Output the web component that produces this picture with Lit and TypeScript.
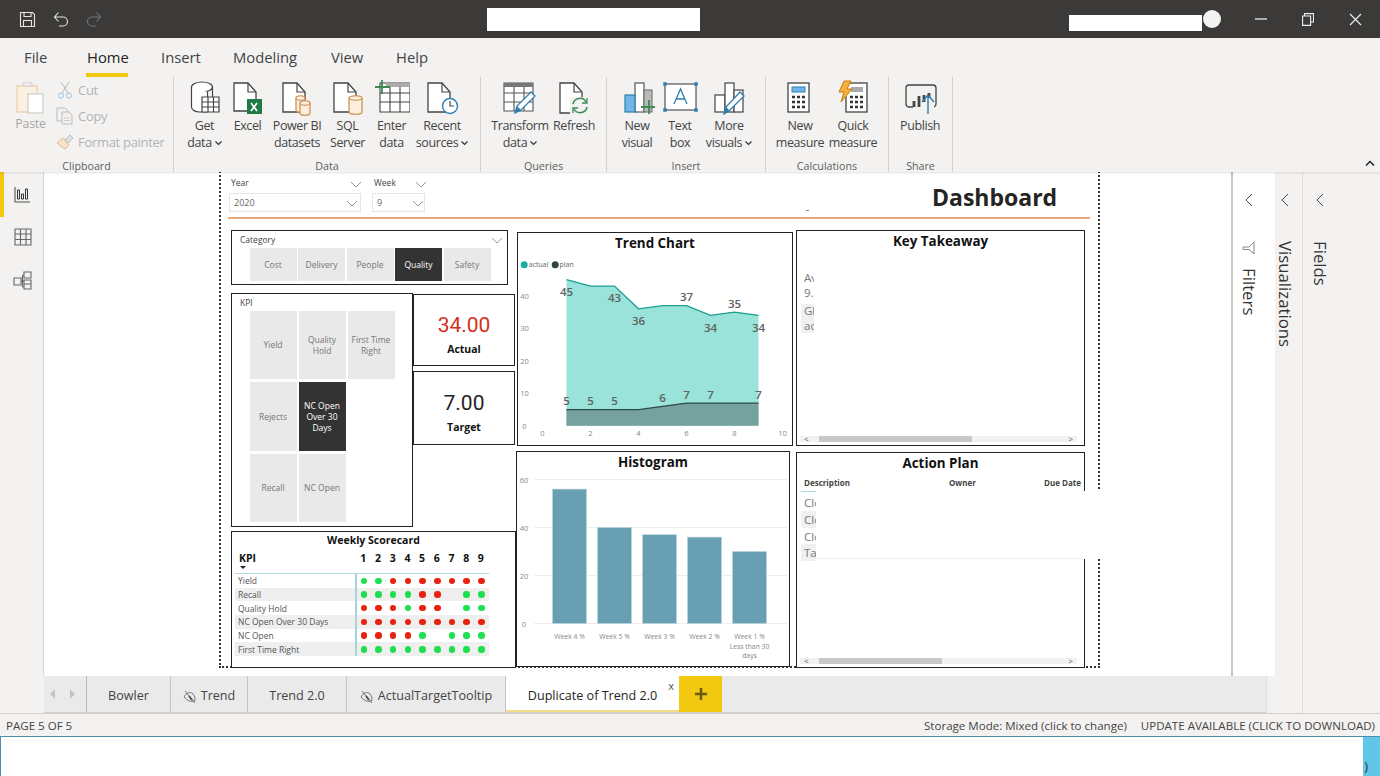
import { LitElement, html, css, svg } from "lit";
import { customElement } from "lit/decorators.js";

const FILE = "#fff";
const ink = "#444";

const icons: Record<string, unknown> = {
  getdata: svg`<ellipse cx="15" cy="7" rx="10.500" ry="5" fill="${FILE}" stroke="${ink}" stroke-width="1.2"/>
    <path d="M4.500 7v20c0 3 4 5 8 5h8V12" fill="${FILE}" stroke="${ink}" stroke-width="1.2"/>
    <path d="M25.500 7v10" stroke="${ink}" stroke-width="1.2"/>
    <path d="M15 17h17v15H15zM15 22h17M15 27h17M21 17v15M26.500 17v15" fill="${FILE}" stroke="${ink}" stroke-width="1.2"/>`,
  excel: svg`<path d="M4 3h14l8 9v19H4z" fill="${FILE}" stroke="${ink}" stroke-width="1.300"/><path d="M18 3v9h8" fill="none" stroke="${ink}" stroke-width="1.200"/>
    <rect x="17" y="19" width="15" height="15" fill="#1f7a45"/><path d="M21 23l6 8M27 23l-6 8" stroke="#fff" stroke-width="1.700"/>`,
  pbi: svg`<path d="M4 3h14l8 9v20H4z" fill="${FILE}" stroke="${ink}" stroke-width="1.300"/><path d="M18 3v9h8" fill="none" stroke="${ink}" stroke-width="1.200"/>
    <path d="M17 18c0-3 9-3 9 0v12c0 3-9 3-9 0z" fill="#fbeedd" stroke="#c98a4a" stroke-width="1.200"/><path d="M17 18c0 3 9 3 9 0" fill="none" stroke="#c98a4a"/>
    <path d="M21 23c0-3 10-3 10 0v10c0 3-10 3-10 0z" fill="#fbeedd" stroke="#c98a4a" stroke-width="1.200"/><path d="M21 23c0 3 10 3 10 0" fill="none" stroke="#c98a4a"/>`,
  sql: svg`<path d="M4 3h14l8 9v20H4z" fill="${FILE}" stroke="${ink}" stroke-width="1.300"/><path d="M18 3v9h8" fill="none" stroke="${ink}" stroke-width="1.200"/>
    <path d="M19 18c0-3 13-3 13 0v14c0 3-13 3-13 0z" fill="#fbeedd" stroke="#c98a4a" stroke-width="1.200"/><path d="M19 18c0 3 13 3 13 0" fill="none" stroke="#c98a4a"/>`,
  enter: svg`<path d="M6 3h30v29H6zM6 13h30M6 22h30M16 7v25M26 7v25" fill="${FILE}" stroke="${ink}" stroke-width="1.100"/>
    <rect x="12" y="3" width="24" height="4" fill="#aaa"/><path d="M8 0v14M1 7h15" stroke="#3d8a55" stroke-width="1.800"/>`,
  recent: svg`<path d="M4 3h14l8 9v20H4z" fill="${FILE}" stroke="${ink}" stroke-width="1.300"/><path d="M18 3v9h8" fill="none" stroke="${ink}" stroke-width="1.200"/>
    <circle cx="26" cy="26" r="7.500" fill="#fff" stroke="#2e7fb0" stroke-width="1.400"/><path d="M26 21v5h4" fill="none" stroke="#444" stroke-width="1.200"/>`,
  transform: svg`<path d="M2 3h29v28H2zM2 13h29M2 22h29M12 7v24M22 7v24" fill="${FILE}" stroke="#555" stroke-width="1.100"/><rect x="2" y="3" width="29" height="4" fill="#777"/>
    <path d="M13 33l2-7L29 12l4 4-14 14z" fill="#fff" stroke="#2e7fb0" stroke-width="1.300"/><path d="M13 33l2-7 4 4z" fill="#2e7fb0"/>`,
  refresh: svg`<path d="M4 3h14l8 9v21H4z" fill="${FILE}" stroke="${ink}" stroke-width="1.300"/><path d="M18 3v9h8" fill="none" stroke="${ink}" stroke-width="1.200"/>
    <rect x="14" y="17" width="19" height="17" fill="#f3f2f1"/>
    <path d="M17 24a7 7 0 0 1 13-2M31 27a7 7 0 0 1-13 2" fill="none" stroke="#3d8a55" stroke-width="1.500"/><path d="M31 18v5h-5M17 33v-5h5" fill="none" stroke="#3d8a55" stroke-width="1.300"/>`,
  newvisual: svg`<rect x="16" y="3" width="9" height="29" fill="#fff" stroke="#555" stroke-width="1.200"/><rect x="25" y="10" width="8" height="22" fill="#bbb" stroke="#666" stroke-width="1"/>
    <rect x="6" y="15" width="10" height="17" fill="#72b4ea" stroke="#2e7fb0" stroke-width="1.200"/><path d="M30 20v14M22 27h15" stroke="#3d8a55" stroke-width="1.800"/>`,
  textbox: svg`<rect x="3" y="4" width="31" height="26" fill="#fff" stroke="#444" stroke-width="1.100"/>
    <path d="M3 4h.01M34 4h.01M3 30h.01M34 30h.01" stroke="#2e7fb0" stroke-width="3.500" stroke-linecap="square"/>
    <path d="M12 24l6.500-15L25 24M14.500 19h8" fill="none" stroke="#2e7fb0" stroke-width="1.300"/>`,
  more: svg`<rect x="4" y="15" width="10" height="17" fill="#fff" stroke="#444" stroke-width="1.200"/><rect x="14" y="3" width="9" height="29" fill="#fff" stroke="#444" stroke-width="1.200"/><rect x="23" y="10" width="9" height="22" fill="#fff" stroke="#444" stroke-width="1.200"/>
    <path d="M13 34l2-7L29 12l4 4-14 14z" fill="#fff" stroke="#2e7fb0" stroke-width="1.300"/><path d="M13 34l2-7 4 4z" fill="#2e7fb0"/>`,
  measure: svg`<rect x="6" y="3" width="21" height="29" fill="#fff" stroke="#444" stroke-width="1.300"/><rect x="10" y="7" width="13" height="5" fill="#72b4ea" stroke="#2e7fb0"/>
    <path d="M10 17h3M15 17h3M20 17h3M10 22h3M15 22h3M20 22h3M10 27h3M15 27h3M20 27h3" stroke="#333" stroke-width="2.500"/>`,
  quick: svg`<rect x="11" y="3" width="21" height="29" fill="#fff" stroke="#444" stroke-width="1.300"/><rect x="16" y="7" width="12" height="5" fill="#aaa"/>
    <path d="M15 17h3M20 17h3M25 17h3M15 22h3M20 22h3M25 22h3M15 27h3M20 27h3M25 27h3" stroke="#333" stroke-width="2.500"/>
    <path d="M9 1h7l-4 8h5L6 22l3-10H4z" fill="#f4b23c" stroke="#c67b10" stroke-width="1"/>`,
  publish: svg`<path d="M11 27H7a3 3 0 0 1-3-3V8a3 3 0 0 1 3-3h24a3 3 0 0 1 3 3v16a3 3 0 0 1-2 3" fill="none" stroke="#444" stroke-width="1.300"/>
    <path d="M12 27v-6M17 27V16M22 22v-7M27 18v-5" stroke="#444" stroke-width="2.800"/><path d="M26 34V16M20 22l6-7 6 7" fill="none" stroke="#2e7fb0" stroke-width="1.400"/>`,
};

interface Btn {
  w: number;
  icon: string;
  lines: string[];
  caret?: boolean;
}
interface Group {
  label: string;
  pad: number;
  width: number;
  btns: Btn[];
}

const groups: Group[] = [
  {
    label: "Data", pad: 9, width: 307,
    btns: [
      { w: 43, icon: "getdata", lines: ["Get", "data"], caret: true },
      { w: 43, icon: "excel", lines: ["Excel"] },
      { w: 56, icon: "pbi", lines: ["Power BI", "datasets"] },
      { w: 45, icon: "sql", lines: ["SQL", "Server"] },
      { w: 43, icon: "enter", lines: ["Enter", "data"] },
      { w: 58, icon: "recent", lines: ["Recent", "sources"], caret: true },
    ],
  },
  {
    label: "Queries", pad: 10, width: 126,
    btns: [
      { w: 58, icon: "transform", lines: ["Transform", "data"], caret: true },
      { w: 50, icon: "refresh", lines: ["Refresh"] },
    ],
  },
  {
    label: "Insert", pad: 9, width: 159,
    btns: [
      { w: 42, icon: "newvisual", lines: ["New", "visual"] },
      { w: 44, icon: "textbox", lines: ["Text", "box"] },
      { w: 54, icon: "more", lines: ["More", "visuals"], caret: true },
    ],
  },
  {
    label: "Calculations", pad: 9, width: 123,
    btns: [
      { w: 50, icon: "measure", lines: ["New", "measure"] },
      { w: 56, icon: "quick", lines: ["Quick", "measure"] },
    ],
  },
  {
    label: "Share", pad: 9, width: 64,
    btns: [{ w: 44, icon: "publish", lines: ["Publish"] }],
  },
];

const ACTUAL = [45, 43, 43, 36, 37, 37, 34, 35, 34];
const PLAN = [5, 5, 5, 5, 6, 7, 7, 7, 7];
const actualLabels = [
  [1, 45, 292], [3, 43, 298], [4, 36, 321], [6, 37, 297], [7, 34, 328], [8, 35, 304], [9, 34, 328],
];
const planLabels = [
  [1, 5, 401], [2, 5, 401], [3, 5, 401], [5, 6, 398], [6, 7, 395], [7, 7, 395], [9, 7, 395],
];

const SCORE: [string, string][] = [
  ["Yield", "GGRRRRRRR"],
  ["Recall", "GGGGRR-GG"],
  ["Quality Hold", "RRRGRR-GG"],
  ["NC Open Over 30 Days", "RRRRRRRRR"],
  ["NC Open", "RRRRG-GGG"],
  ["First Time Right", "GGGGGGGGG"],
];

const BARS = [
  { label: ["Week 4 %"], v: 56 },
  { label: ["Week 5 %"], v: 40 },
  { label: ["Week 3 %"], v: 37 },
  { label: ["Week 2 %"], v: 36 },
  { label: ["Week 1 %", "Less than 30", "days"], v: 30 },
];

const chevron = svg`<path d="M1 1l5 5 5-5" fill="none" stroke="currentColor" stroke-width="1"/>`;

@customElement("app-root")
export class AppRoot extends LitElement {
  static styles = css`
    :host {
      display: block;
      width: 1380px;
      height: 776px;
      overflow: hidden;
      font-family: "Open Sans", "Noto Sans", sans-serif;
      color: #333;
      background: #f3f2f1;
    }
    .titlebar {
      height: 38px;
      background: #3b3a39;
      display: flex;
      align-items: center;
      position: relative;
    }
    .qa { display: flex; gap: 17px; padding-left: 19px; align-items: center; }
    .qa svg { display: block; }
    .doc { width: 213px; height: 23px; background: #fff; margin-left: 385px; }
    .spacer { flex: 1; }
    .user { width: 133px; height: 16px; background: #fff; margin-top: 7px; }
    .avatar { width: 18px; height: 18px; border-radius: 50%; background: #f3f2f1; margin-left: 1px; margin-right: 34px; }
    .winbtns { display: flex; gap: 35px; padding-right: 18px; align-items: center; }
    .winbtns svg { display: block; }

    .ribbon { height: 134px; background: #f3f2f1; position: relative; box-shadow: 0 1px 2px rgba(0, 0, 0, 0.12); z-index: 2; }
    .tabs { display: flex; height: 39px; font-size: 14.800px; color: #444; }
    .tabs span { display: block; padding-top: 9px; height: 30px; position: relative; }
    .tabs .file { margin-left: 24px; width: 63px; }
    .tabs .home { width: 74px; color: #252423; }
    .tabs .home::after { content: ""; position: absolute; left: -1px; width: 42px; top: 35px; height: 4px; background: #f2c811; }
    .tabs .insert { width: 72px; }
    .tabs .modeling { width: 98px; }
    .tabs .view { width: 65px; }
    .groups { display: flex; height: 95px; }
    .group { box-sizing: border-box; border-right: 1px solid #d2d0ce; position: relative; display: flex; height: 95px; }
    .clipboard { width: 174px; box-sizing: border-box; padding-left: 13px; display: flex; }
    .paste { width: 35px; text-align: center; font-size: 12.500px; letter-spacing: -0.300px; color: #a8a6a4; padding-top: 3px; line-height: 17px; }
    .paste svg { display: block; margin: 0 auto 1px; }
    .clip-col { display: flex; flex-direction: column; margin-left: 8px; font-size: 13px; letter-spacing: -0.300px; color: #b5b3b1; }
    .clip-col div { display: flex; align-items: center; gap: 4px; height: 26px; white-space: nowrap; }
    .btn { display: flex; flex-direction: column; align-items: center; font-size: 12.500px; letter-spacing: -0.400px; line-height: 17px; color: #444; padding-top: 3px; }
    .btn svg.ic { display: block; margin-bottom: 1px; height: 36px; width: 36px; flex: none; }
    .btn span { white-space: nowrap; }
    .caret { display: inline-block; margin-left: 3px; vertical-align: 1px; }
    .glabel { position: absolute; left: 0; right: 0; top: 82px; text-align: center; font-size: 10.700px; color: #605e5c; line-height: 14px; }
    .collapse { position: absolute; right: 5px; top: 122px; }

    .main { display: flex; height: 541px; }
    .left-col { width: 1266px; flex: none; display: flex; flex-direction: column; }
    .canvas-row { display: flex; height: 504px; flex: none; }
    .nav { width: 44px; flex: none; box-sizing: border-box; border-right: 1px solid #d8d6d4; background: #f3f2f1; position: relative; display: flex; flex-direction: column; align-items: center; gap: 25px; padding-top: 14px; padding-left: 2px; }
    .nav .active { position: absolute; left: 0; top: 0; width: 4px; height: 45px; background: #f2c811; }
    .nav svg { display: block; }
    .report { width: 1231px; flex: none; background: #fff; position: relative; overflow: hidden; }
    .filters, .viz, .fields { flex: none; display: flex; flex-direction: column; align-items: center; box-sizing: border-box; padding-top: 21px; font-size: 16.800px; color: #333; }
    .filters { width: 35px; background: #fff; border-left: 2px solid #c8c6c4; padding-right: 2px; }
    .viz { width: 36px; background: #f3f2f1; border-left: 1px solid #e1dfdd; height: 541px; }
    .fields { width: 34px; background: #f3f2f1; border-left: 1px solid #e1dfdd; height: 541px; }
    .vtext { writing-mode: vertical-rl; line-height: 20px; }
    .chev { display: block; margin-bottom: 34px; }
    .funnel { display: block; margin-bottom: 13px; }

    /* the report page is a free canvas, so its visuals are placed by coordinates (page origin: 44,172) */
    .page { position: absolute; left: 175px; top: -20px; width: 881px; height: 516px; border: 2px dotted #333; box-sizing: border-box; }
    .v { position: absolute; box-sizing: border-box; background: #fff; }
    .boxed { border: 1.500px solid #222; }
    .vt { text-align: center; font-weight: 700; color: #111; font-size: 13.400px; line-height: 20px; }
    .slabel { position: absolute; font-size: 8.500px; color: #444; line-height: 12px; }
    .sel { position: absolute; box-sizing: border-box; border: 1px solid #e6e6e6; height: 19px; font-size: 9px; color: #666; padding: 3px 0 0 4px; line-height: 12px; }
    .schev { position: absolute; color: #999; }
    .rule { position: absolute; left: 184px; top: 45px; width: 862px; height: 1.500px; background: #e8a87a; }
    .dash-title { position: absolute; left: 888px; top: 8px; font-size: 23px; font-weight: 700; color: #252423; line-height: 34px; }
    .mini { position: absolute; left: 762px; top: 38px; width: 3px; height: 1px; background: #888; }

    .category { left: 187px; top: 58px; width: 277px; height: 55px; }
    .cat-btns { position: absolute; left: 17.500px; top: 16.500px; display: flex; gap: 1.500px; }
    .tile { background: #e9e9e9; color: #777; font-size: 8.500px; line-height: 11px; display: flex; align-items: center; justify-content: center; text-align: center; box-sizing: border-box; padding: 0 3px; }
    .tile.on { background: #333; color: #fff; }
    .cat-btns .tile { width: 47px; height: 33px; }
    .kpi { left: 187px; top: 121px; width: 182px; height: 234px; }
    .kpi-grid { position: absolute; left: 17.500px; top: 16.500px; display: grid; grid-template-columns: 47px 47px 47px; grid-template-rows: 68px 69px 68px; column-gap: 2px; row-gap: 3px; }
    .card { left: 369px; width: 102px; text-align: center; display: flex; flex-direction: column; align-items: center; }
    .actual { top: 122px; height: 72px; }
    .target { top: 199px; height: 74px; }
    .num { font-family: Roboto, sans-serif; font-size: 21px; line-height: 28px; margin-top: 15.500px; color: #252423; }
    .num.red { color: #d4301a; }
    .cardl { font-size: 10.500px; font-weight: 700; color: #111; line-height: 14px; margin-top: 3px; }
    .target .num { margin-top: 16.500px; }

    .trend { left: 473px; top: 60px; width: 276px; height: 214px; }
    .trend svg, .hist svg { position: absolute; left: 0; top: 0; }
    .take { left: 752px; top: 58px; width: 289px; height: 216px; }
    .clip { position: absolute; left: 4px; width: 13px; box-sizing: border-box; padding-left: 3px; overflow: hidden; font-size: 11.500px; line-height: 14.500px; color: #777; white-space: nowrap; }
    .clip.alt { background: #f0f0f0; }
    .sbar { position: absolute; left: 3px; right: 7px; height: 6px; background: #f1f1f1; }
    .sbar i { position: absolute; top: 0; left: 19px; height: 6px; background: #c8c8c8; display: block; }
    .sbar b { position: absolute; top: -2px; font-weight: 400; font-size: 8px; line-height: 10px; color: #555; }
    .plan { left: 752px; top: 280px; width: 289px; height: 216px; }
    .ph { position: absolute; top: 24px; font-size: 8px; font-weight: 700; color: #444; line-height: 12px; }
    .tline { position: absolute; left: 4px; top: 38px; width: 15px; height: 1px; background: #a9dcdc; }
    .prow { position: absolute; left: 4px; width: 15px; box-sizing: border-box; padding-left: 3px; height: 17px; overflow: hidden; font-size: 11.500px; line-height: 17px; color: #777; white-space: nowrap; }
    .prow.alt { background: #f0f0f0; }
    .patch { position: absolute; left: 772px; top: 319px; width: 284px; height: 68px; background: #fff; }
    .patch::after { content: ""; position: absolute; left: 0; bottom: 0; width: 265px; height: 1px; background: #eeeeee; }
    .hist { left: 472px; top: 279px; width: 274px; height: 216px; }
    .score { left: 187px; top: 359px; width: 285px; height: 137px; }
    .score .vt { font-size: 10.500px; line-height: 14px; margin-top: 1px; }
    .sc-head { position: absolute; left: 3px; top: 19px; width: 254px; height: 23px; border-bottom: 1.500px solid #b0dce0; box-sizing: border-box; display: grid; grid-template-columns: 117px repeat(9, 14.700px); font-size: 10.500px; font-weight: 700; color: #111; line-height: 14px; padding-left: 4px; }
    .sc-head span { text-align: center; }
    .sc-head .k { text-align: left; }
    .arrow { position: absolute; left: 5px; top: 15px; width: 0; height: 0; border-left: 3.500px solid transparent; border-right: 3.500px solid transparent; border-top: 3.500px solid #222; }
    .sc-body { position: absolute; left: 3px; top: 42px; width: 254px; }
    .sc-row { display: grid; grid-template-columns: 120px 1.500px repeat(9, 14.700px); height: 13.700px; align-items: center; font-size: 8.500px; color: #555; line-height: 13px; }
    .sc-row.alt { background: #efefef; }
    .sc-row .name { padding-left: 3px; white-space: nowrap; }
    .sc-row .bar { background: #a5d5d8; height: 100%; }
    .dot { width: 6.500px; height: 6.500px; border-radius: 50%; justify-self: center; }
    .dot.R { background: #e8220e; }
    .dot.G { background: #1ee04e; }

    .tabstrip { margin-left: 44px; display: flex; background: #eaeaea; height: 37px; flex: none; border-bottom: 1px solid #d2d0ce; box-sizing: border-box; }
    .pg-nav { width: 43px; box-sizing: border-box; border-right: 1px solid #bbb; display: flex; align-items: center; gap: 13px; padding-left: 6px; }
    .tab { box-sizing: border-box; border-right: 1px solid #c8c6c4; display: flex; align-items: center; justify-content: center; gap: 4px; font-size: 12.600px; color: #444; white-space: nowrap; padding-top: 2px; }
    .tab svg { display: block; margin-top: 3px; }
    .tab.cur { background: #fff; border-right: none; color: #252423; box-shadow: inset 0 -2px 0 #f2dc8a; position: relative; }
    .tab.cur .x { position: absolute; right: 5px; top: 4px; font-size: 11px; line-height: 12px; color: #555; }
    .plus { width: 43px; background: #f2c811; display: flex; align-items: center; justify-content: center; height: 36px; }
    .statusbar { height: 23px; background: #f3f2f1; border-top: 1px solid #d2d0ce; box-sizing: border-box; display: flex; align-items: center; font-size: 11.550px; color: #444; white-space: nowrap; }
    .statusbar .pg { margin-left: 6px; flex: 1; }
    .statusbar .mode { margin-right: 14px; }
    .statusbar .upd { margin-right: 5px; }
    .bottom { height: 40px; background: #fff; position: relative; border-top: 1.500px solid #4d8fa6; box-sizing: border-box; border-left: 1px solid #4a90a8; }
    .bottom .strip { position: absolute; right: 0; top: 0; bottom: 0; width: 17px; background: #62c6e8; }
    .bottom .cut { position: absolute; right: 12px; bottom: 3px; font-size: 13px; color: #333; line-height: 14px; z-index: 1; }
  `;

  private renderTrend() {
    const px = (x: number) => 543 + x * 24 - 518.5;
    const py = (y: number) => 426.3 - y * 3.25 - 233.5;
    const line = (d: number[]) => d.map((v, i) => `${px(i + 1)},${py(v)}`).join(" ");
    const area = (d: number[]) => `${px(1)},${py(0)} ${line(d)} ${px(9)},${py(0)}`;
    return svg`<svg width="273" height="211" font-family="Open Sans, sans-serif">
      <circle cx="6.200" cy="31.800" r="3.500" fill="#1aaea0"/><text x="10.800" y="34.300" font-size="7" fill="#666">actual</text>
      <circle cx="37.200" cy="31.800" r="3.500" fill="#2f4444"/><text x="41.500" y="34.300" font-size="7" fill="#666">plan</text>
      ${[0, 10, 20, 30, 40].map((t) => svg`<text x="6.500" y="${py(t) + 3}" font-size="7.500" fill="#888" text-anchor="middle">${t}</text>`)}
      ${[0, 2, 4, 6, 8, 10].map((t) => svg`<text x="${px(t)}" y="203" font-size="7.500" fill="#888" text-anchor="middle">${t}</text>`)}
      <polygon points="${area(ACTUAL)}" fill="#9ae3da"/>
      <polyline points="${line(ACTUAL)}" fill="none" stroke="#1a9f92" stroke-width="1.300"/>
      <polygon points="${area(PLAN)}" fill="#75a29e"/>
      <polyline points="${line(PLAN)}" fill="none" stroke="#2c4a48" stroke-width="1.300"/>
      ${[...actualLabels, ...planLabels].map(
        ([x, v, y]) => svg`<text x="${px(x)}" y="${y - 233.5 + 4}" font-size="11.500" font-weight="600" fill="#5e6261" text-anchor="middle">${v}</text>`
      )}
    </svg>`;
  }

  private renderHist() {
    const ox = 517.5;
    const oy = 452.5;
    const py = (v: number) => 624 - v * 2.4 - oy;
    return svg`<svg width="271" height="213" font-family="Open Sans, sans-serif">
      ${[0, 20, 40, 60].map(
        (t) => svg`<line x1="17" x2="270" y1="${py(t)}" y2="${py(t)}" stroke="#eeeeee"/>
          <text x="7" y="${py(t) + 3}" font-size="7.500" fill="#888" text-anchor="middle">${t}</text>`
      )}
      ${BARS.map((b, i) => {
        const x = 553 + i * 45 - ox;
        return svg`<rect x="${x}" y="${py(b.v)}" width="34" height="${b.v * 2.4}" fill="#689fb2" stroke="#bcd6de" stroke-width="0.600"/>
          ${b.label.map(
            (l, j) => svg`<text x="${x + 17}" y="${187 + j * 9.500}" font-size="6.800" fill="#888" text-anchor="middle">${l}</text>`
          )}`;
      })}
    </svg>`;
  }

  private ribbon() {
    return html`<div class="ribbon">
      <div class="tabs">
        <span class="file">File</span><span class="home">Home</span><span class="insert">Insert</span><span class="modeling">Modeling</span><span class="view">View</span><span>Help</span>
      </div>
      <div class="groups">
        <div class="group clipboard">
          <div class="paste">
            <svg width="34" height="34" viewBox="0 0 34 34"><path d="M3 6h20v26H3z" fill="#fbf0e2" stroke="#ecd2b2" stroke-width="1.300"/><path d="M9 6V3h3a2 2 0 0 1 3 0h3v3z" fill="#f3f2f1" stroke="#cfcdcb"/><rect x="14" y="14" width="15" height="19" fill="#fff" stroke="#cfcdcb" stroke-width="1.200"/></svg>
            Paste
          </div>
          <div class="clip-col">
            <div>
              <svg width="18" height="18" viewBox="-2 0 18 18"><path d="M3 1l7 11M11 1L4 12" stroke="#bbb" fill="none"/><circle cx="3" cy="14.500" r="2.500" fill="none" stroke="#9cc1da"/><circle cx="11" cy="14.500" r="2.500" fill="none" stroke="#9cc1da"/></svg>
              <span>Cut</span>
            </div>
            <div>
              <svg width="18" height="18" viewBox="0 0 18 18"><path d="M1 1h8l3 3v10H1z" fill="none" stroke="#bbb"/><path d="M6 5h7l3 3v9H6z" fill="#f3f2f1" stroke="#bbb"/><path d="M8 11h6M8 13.500h6" stroke="#ccc"/></svg>
              <span>Copy</span>
            </div>
            <div>
              <svg width="18" height="18" viewBox="0 0 18 18"><path d="M1 10l6-5 6 7-4 4z" fill="#f7e3cc" stroke="#e4b98e"/><path d="M9 7l5-5 3 3-5 5z" fill="#e4e2e0" stroke="#bbb"/></svg>
              <span>Format painter</span>
            </div>
          </div>
          <div class="glabel">Clipboard</div>
        </div>
        ${groups.map(
          (g) => html`<div class="group" style="width:${g.width}px;padding-left:${g.pad}px">
            ${g.btns.map(
              (b) => html`<div class="btn" style="width:${b.w}px">
                <svg class="ic" viewBox="0 0 36 36">${icons[b.icon]}</svg>
                ${b.lines.map(
                  (l, i) => html`<span>${l}${b.caret && i === b.lines.length - 1
                    ? html`<svg class="caret" width="7" height="5" viewBox="0 0 7 5"><path d="M.5.5l3 3 3-3" fill="none" stroke="#333" stroke-width="1.200"/></svg>`
                    : ""}</span>`
                )}
              </div>`
            )}
            <div class="glabel">${g.label}</div>
          </div>`
        )}
      </div>
      <svg class="collapse" width="10" height="7" viewBox="0 0 10 7"><path d="M1 5.500l4-4 4 4" fill="none" stroke="#222" stroke-width="1.500"/></svg>
    </div>`;
  }

  private visuals() {
    return html`
      <div class="page"></div>
      <div class="slabel" style="left:187px;top:5px">Year</div>
      <div class="slabel" style="left:330px;top:5px">Week</div>
      <svg class="schev" style="left:306px;top:9px" width="12" height="7" viewBox="0 0 12 7">${chevron}</svg>
      <svg class="schev" style="left:371px;top:9px" width="12" height="7" viewBox="0 0 12 7">${chevron}</svg>
      <div class="sel" style="left:185px;top:21px;width:132px">2020</div>
      <div class="sel" style="left:328px;top:21px;width:53px">9</div>
      <svg class="schev" style="left:302px;top:28px" width="12" height="7" viewBox="0 0 12 7">${chevron}</svg>
      <svg class="schev" style="left:368px;top:28px" width="12" height="7" viewBox="0 0 12 7">${chevron}</svg>
      <div class="rule"></div>
      <div class="dash-title">Dashboard</div>
      <div class="mini"></div>

      <div class="v boxed category">
        <div class="slabel" style="left:8px;top:3px">Category</div>
        <svg class="schev" style="left:259px;top:6px" width="12" height="7" viewBox="0 0 12 7">${chevron}</svg>
        <div class="cat-btns">
          ${["Cost", "Delivery", "People", "Quality", "Safety"].map(
            (c) => html`<div class="tile ${c === "Quality" ? "on" : ""}">${c}</div>`
          )}
        </div>
      </div>

      <div class="v boxed kpi">
        <div class="slabel" style="left:8px;top:3px">KPI</div>
        <div class="kpi-grid">
          <div class="tile">Yield</div>
          <div class="tile">Quality Hold</div>
          <div class="tile">First Time Right</div>
          <div class="tile">Rejects</div>
          <div class="tile on">NC Open Over 30 Days</div>
          <div></div>
          <div class="tile">Recall</div>
          <div class="tile">NC Open</div>
        </div>
      </div>

      <div class="v boxed card actual"><div class="num red">34.00</div><div class="cardl">Actual</div></div>
      <div class="v boxed card target"><div class="num">7.00</div><div class="cardl">Target</div></div>

      <div class="v boxed trend"><div class="vt">Trend Chart</div>${this.renderTrend()}</div>

      <div class="v boxed take">
        <div class="vt">Key Takeaway</div>
        <div class="clip" style="top:40px">Av<br />9.</div>
        <div class="clip alt" style="top:73px">Gl<br />ac</div>
        <div class="sbar" style="top:205px">
          <i style="width:153px"></i><b style="left:4px">&lt;</b><b style="right:4px">&gt;</b>
        </div>
      </div>

      <div class="v boxed plan">
        <div class="vt">Action Plan</div>
        <div class="ph" style="left:7px">Description</div>
        <div class="ph" style="left:152px">Owner</div>
        <div class="ph" style="left:247px">Due Date</div>
        <div class="tline"></div>
        <div class="prow" style="top:41px">Clo</div>
        <div class="prow alt" style="top:58px">Clo</div>
        <div class="prow" style="top:75px">Clo</div>
        <div class="prow alt" style="top:91px">Ta</div>
        <div class="sbar" style="top:205px">
          <i style="width:123px"></i><b style="left:4px">&lt;</b><b style="right:4px">&gt;</b>
        </div>
      </div>
      <div class="patch"></div>

      <div class="v boxed hist"><div class="vt">Histogram</div>${this.renderHist()}</div>

      <div class="v boxed score">
        <div class="vt">Weekly Scorecard</div>
        <div class="sc-head">
          <span class="k">KPI</span>
          ${[1, 2, 3, 4, 5, 6, 7, 8, 9].map((n) => html`<span>${n}</span>`)}
          <div class="arrow"></div>
        </div>
        <div class="sc-body">
          ${SCORE.map(
            ([name, vals], i) => html`<div class="sc-row ${i % 2 ? "alt" : ""}">
              <div class="name">${name}</div>
              <div class="bar"></div>
              ${[...vals].map((c) => (c === "-" ? html`<div></div>` : html`<div class="dot ${c}"></div>`))}
            </div>`
          )}
        </div>
      </div>
    `;
  }

  render() {
    const leftChev = svg`<path d="M7 1L1 7l6 6" fill="none" stroke="#444" stroke-width="1"/>`;
    const hiddenEye = svg`<path d="M1 8c2-4 6-6 9-3 2 2 2.500 5 1.500 7-3 1-6 0-8-1.500z" fill="none" stroke="#666" stroke-width="0.900"/><path d="M2 2l10 12" stroke="#666" stroke-width="0.900"/><path d="M6 7l3 4" stroke="#555" stroke-width="2"/>`;
    return html`
      <div class="titlebar">
        <div class="qa">
          <svg width="17" height="17" viewBox="0 0 17 17"><path d="M1.500 1.500h12l2 2v12h-14z" fill="none" stroke="#e8e6e4" stroke-width="1.100"/><path d="M5 1.500v4h7v-4M4.500 15.500v-6h8v6" fill="none" stroke="#e8e6e4" stroke-width="1.100"/></svg>
          <svg width="16" height="17" viewBox="0 0 16 17"><path d="M2 6h8a4.500 4.500 0 0 1 0 9H6M5.500 1.500L1.500 6l4 4.500" fill="none" stroke="#e8e6e4" stroke-width="1.100"/></svg>
          <svg width="16" height="17" viewBox="0 0 16 17"><path d="M14 6H6a4.500 4.500 0 0 0 0 9h4M10.500 1.500l4 4.500-4 4.500" fill="none" stroke="#77757a" stroke-width="1.100"/></svg>
        </div>
        <div class="doc"></div>
        <div class="spacer"></div>
        <div class="user"></div>
        <div class="avatar"></div>
        <div class="winbtns">
          <svg width="12" height="12" viewBox="0 0 12 12"><path d="M0 6h12" stroke="#eee" stroke-width="1.300"/></svg>
          <svg width="12" height="13" viewBox="3 0 12 13"><path d="M5.500 3V.6h9V9H12M3.600 3h8v9.400h-8z" fill="none" stroke="#eee" stroke-width="1.100"/></svg>
          <svg width="13" height="13" viewBox="0 0 13 13"><path d="M1 1l11 11M12 1L1 12" stroke="#eee" stroke-width="1.200"/></svg>
        </div>
      </div>
      ${this.ribbon()}
      <div class="main">
        <div class="left-col">
          <div class="canvas-row">
            <div class="nav">
              <div class="active"></div>
              <svg width="17" height="17" viewBox="0 0 17 17"><path d="M1 1v15h15" fill="none" stroke="#555" stroke-width="1.100"/><path d="M3.500 13V4h2v9zM7.500 13V8h2v5zM11.500 13V3h2v10z" fill="none" stroke="#333" stroke-width="1"/></svg>
              <svg width="18" height="18" viewBox="0 0 18 18"><path d="M1 1h16v16H1zM1 6h16M1 11.500h16M6.500 1v16M12 1v16" fill="none" stroke="#666" stroke-width="1.100"/></svg>
              <svg width="20" height="20" viewBox="0 0 20 20"><path d="M1 7h7v7H1zM11 1h7v6h-7zM11 9h7v4h-7zM11 13h7v5h-7zM8 10h3M9.500 4v12M9.500 4H11M9.500 16H11" fill="none" stroke="#666" stroke-width="1.100"/></svg>
            </div>
            <div class="report">${this.visuals()}</div>
          </div>
          <div class="tabstrip">
            <div class="pg-nav">
              <svg width="6" height="10" viewBox="0 0 6 10"><path d="M5 0v10L0 5z" fill="#c4c4c4"/></svg>
              <svg width="6" height="10" viewBox="0 0 6 10"><path d="M1 0v10l5-5z" fill="#c4c4c4"/></svg>
            </div>
            <div class="tab" style="width:84px">Bowler</div>
            <div class="tab" style="width:77px"><svg width="14" height="15" viewBox="0 0 14 15">${hiddenEye}</svg>Trend</div>
            <div class="tab" style="width:99px">Trend 2.0</div>
            <div class="tab" style="width:159px"><svg width="14" height="15" viewBox="0 0 14 15">${hiddenEye}</svg>ActualTargetTooltip</div>
            <div class="tab cur" style="width:173px">Duplicate of Trend 2.0<span class="x">x</span></div>
            <div class="plus"><svg width="12" height="12" viewBox="0 0 12 12"><path d="M6 0v12M0 6h12" stroke="#6a5a10" stroke-width="2.500"/></svg></div>
          </div>
        </div>
        <div class="filters" style="height:504px;margin-left:-35px;position:relative">
          <svg class="chev" width="8" height="14" viewBox="0 0 8 14">${leftChev}</svg>
          <svg class="funnel" width="13" height="14" viewBox="0 0 13 14"><path d="M12 1v12L7 8.500H1V6h6z" fill="none" stroke="#888"/></svg>
          <div class="vtext">Filters</div>
        </div>
        <div class="viz">
          <svg class="chev" width="8" height="14" viewBox="0 0 8 14">${leftChev}</svg>
          <div class="vtext">Visualizations</div>
        </div>
        <div class="fields">
          <svg class="chev" width="8" height="14" viewBox="0 0 8 14">${leftChev}</svg>
          <div class="vtext">Fields</div>
        </div>
      </div>
      <div class="statusbar">
        <span class="pg">PAGE 5 OF 5</span>
        <span class="mode">Storage Mode: Mixed (click to change)</span>
        <span class="upd">UPDATE AVAILABLE (CLICK TO DOWNLOAD)</span>
      </div>
      <div class="bottom"><span class="cut">)</span><div class="strip"></div></div>
    `;
  }
}
